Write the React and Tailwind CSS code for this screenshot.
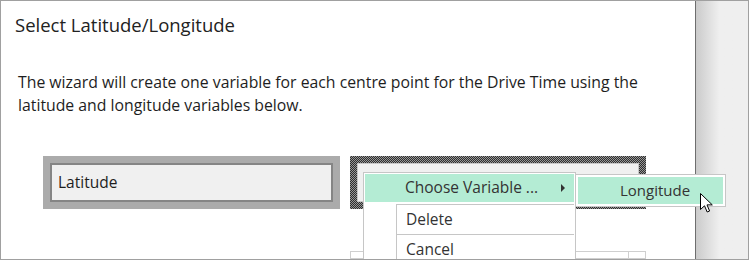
import React from "react";

function Cursor() {
  return (
    <svg width="13" height="20" viewBox="0 0 13 20" className="absolute left-[699px] top-[192px]">
      <path d="M0.5 0.5 L0.5 16.5 L4.5 12.8 L7.2 19 L9.6 18 L7 11.9 L12.3 11.9 Z" fill="#ffffff" stroke="#000000" strokeWidth="1" strokeLinejoin="miter" />
    </svg>
  );
}

export default function App() {
  return (
    <div className="w-[749px] h-[260px] relative overflow-hidden bg-white border border-[#a0a0a0] flex font-['Open_Sans',_'Noto_Sans',sans-serif] text-[#1e1e1e]">
      <div className="w-[694px] h-full flex flex-col">
        <div className="pl-[14px] pt-[11px] text-[18.5px] leading-[26px] text-[#222]">Select Latitude/Longitude</div>
        <div className="pl-[17px] pt-[33px] pr-[30px] text-[15.8px] leading-[23px]">
          The wizard will create one variable for each centre point for the Drive Time using the latitude and longitude variables below.
        </div>
        <div className="flex gap-[10px] pl-[42px] mt-[39px]">
          <div className="w-[297px] h-[53px] border-[7px] border-[#ababab]">
            <div className="h-full border-2 border-[#858585] bg-[#f0f0f0] pl-[6px] flex items-center text-[15.5px]">Latitude</div>
          </div>
          <div className="w-[296px] h-[53px] p-[7px] [background:repeating-conic-gradient(#2e2e2e_0_25%,#969696_0_50%)_0_0/2px_2px]">
            <div className="h-full border border-[#c8c8c8] bg-[#f0f0f0]"></div>
          </div>
        </div>
        <div className="ml-[349px] mt-[42px] w-[296px] h-[20px] border border-[#cfcfcf] flex justify-end">
          <div className="w-[17px] h-full border-l border-[#cfcfcf]"></div>
        </div>
      </div>
      <div className="w-px h-full bg-[#6e6e6e]"></div>
      <div className="flex-1 h-full bg-linear-to-r from-[#cbcbcb] to-[#efefef] to-45%"></div>

      {/* context menu */}
      <div className="absolute left-[362px] top-[171px] w-[213px] h-[100px] bg-white border border-[#c6c6c6] p-px text-[15.5px] text-[#333]">
        <div className="h-[28px] bg-[#b4ecd4] flex items-center pl-[40px] relative">
          <span>Choose Variable ...</span>
          <span className="absolute left-[196px] top-[10px] w-0 h-0 border-y-[4px] border-y-transparent border-l-[4px] border-l-[#333]"></span>
        </div>
        <div className="ml-[31px] border-l border-[#c6c6c6] h-full">
          <div className="mt-[2px] border-t border-[#c6c6c6] h-[30px] flex items-center pl-[9px]">Delete</div>
          <div className="border-t border-[#c6c6c6] h-[30px] flex items-center pl-[9px]">Cancel</div>
        </div>
      </div>

      {/* submenu */}
      <div className="absolute left-[574px] top-[173px] w-[151px] h-[33px] bg-white border border-[#c6c6c6] p-[2px] text-[15px] text-[#333]">
        <div className="h-full bg-[#b4ecd4] flex items-center pl-[42px]">Longitude</div>
      </div>
      <Cursor />
    </div>
  );
}
